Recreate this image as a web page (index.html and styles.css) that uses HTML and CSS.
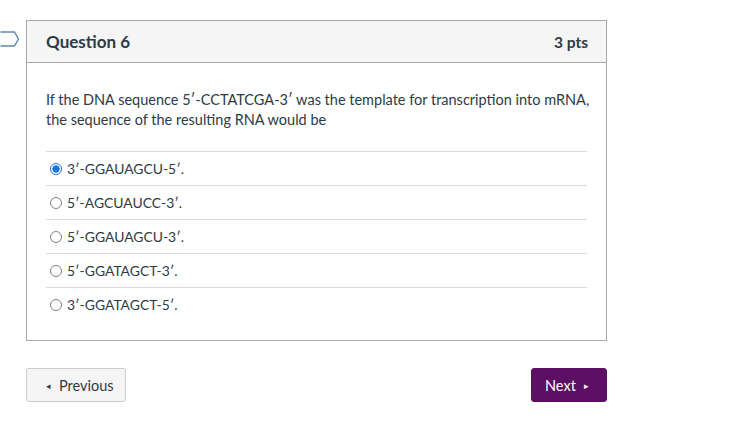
FILE: index.html
```html
<!DOCTYPE html>
<html>
<head>
<meta charset="utf-8">
<link rel="stylesheet" href="styles.css">
</head>
<body>
<div class="page">
  <svg class="marker" width="20" height="17" viewBox="0 0 20 17"><path d="M0.5 1 H14.5 L18.5 8 L14.5 15 H0.5" fill="none" stroke="#5f8aad" stroke-width="1.5" stroke-linejoin="round"/></svg>
  <div class="card">
    <div class="card-header">
      <span class="title">Question 6</span>
      <span class="pts">3 pts</span>
    </div>
    <div class="card-body">
      <p class="question">If the DNA sequence 5′-CCTATCGA-3′ was the template for transcription into mRNA, the sequence of the resulting RNA would be</p>
      <div class="answers">
        <label class="answer"><span class="radio checked"></span>3′-GGAUAGCU-5′.</label>
        <label class="answer"><span class="radio"></span>5′-AGCUAUCC-3′.</label>
        <label class="answer"><span class="radio"></span>5′-GGAUAGCU-3′.</label>
        <label class="answer"><span class="radio"></span>5′-GGATAGCT-3′.</label>
        <label class="answer"><span class="radio"></span>3′-GGATAGCT-5′.</label>
      </div>
    </div>
  </div>
  <div class="nav">
    <button class="btn prev"><span class="tri">◂</span>Previous</button>
    <button class="btn next">Next<span class="tri">▸</span></button>
  </div>
</div>
</body>
</html>
```
FILE: styles.css
```css
html, body {
  margin: 0;
  background: #fff;
  font-family: Lato, "Open Sans", sans-serif;
  color: #2d3b45;
}
.page {
  position: relative;
  padding: 20px 0 0 26px;
  width: 581px;
}
.marker {
  position: absolute;
  left: 0;
  top: 31px;
}
.card {
  border: 1px solid #a9a9a9;
  box-sizing: border-box;
  width: 581px;
}
.card-header {
  display: flex;
  justify-content: space-between;
  align-items: center;
  height: 41px;
  background: #f5f5f5;
  border-bottom: 1px solid #a9a9a9;
  padding: 0 18px 0 19px;
}
.title {
  font-weight: 700;
  font-size: 17px;
}
.pts {
  font-weight: 700;
  font-size: 15.5px;
  color: #2d3b45;
}
.card-body {
  padding: 27px 19px 19px 19px;
}
.question {
  margin: 0 -8px 21px 0;
  font-size: 14.5px;
  line-height: 20px;
}
.answers {
  display: flex;
  flex-direction: column;
}
.answer {
  display: flex;
  align-items: center;
  box-sizing: border-box;
  height: 34px;
  border-top: 1px solid #dcdcdc;
  font-size: 13.9px;
  padding-left: 4px;
}
.radio {
  width: 12px;
  height: 12px;
  border: 1px solid #808080;
  border-radius: 50%;
  margin-right: 5px;
  box-sizing: border-box;
  flex: none;
}
.radio.checked {
  border: 1px solid #2176e8;
  background: radial-gradient(circle, #1a73e8 0 3.4px, #fff 3.9px);
}
.nav {
  display: flex;
  justify-content: space-between;
  margin-top: 27px;
}
.btn {
  height: 34px;
  font-family: Lato, "Open Sans", sans-serif;
  font-size: 14.5px;
  border-radius: 3px;
  padding: 0;
  display: flex;
  align-items: center;
  justify-content: flex-start;
}
.btn .tri {
  font-size: 9px;
}
.prev {
  width: 100px;
  background: #f5f5f5;
  border: 1px solid #c7cdd1;
  color: #2d3b45;
  padding-left: 19px;
}
.prev .tri {
  margin-right: 8px;
}
.next {
  width: 76px;
  background: #5c0f63;
  border: 1px solid #5c0f63;
  color: #fff;
  padding-left: 13px;
}
.next .tri {
  margin-left: 8px;
}
```
